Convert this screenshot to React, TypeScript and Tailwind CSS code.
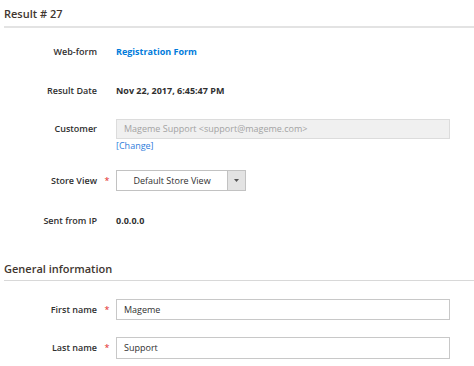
import React from "react";

const Label = ({ children, req }: { children: React.ReactNode; req?: boolean }) => (
  <div className="flex items-center shrink-0">
    <div className="w-[93px] text-right text-[9px] text-[#303030] font-semibold">{children}</div>
    <div className="w-[19px] text-center text-[9px] text-[#e22626] pl-[1px]">{req ? "*" : ""}</div>
  </div>
);

export default function App() {
  return (
    <div className="w-[474px] h-[366px] bg-white overflow-hidden" style={{ fontFamily: '"Open Sans", sans-serif' }}>
      <div className="pl-[4px]">
        <div className="h-[28px] flex items-center text-[11px] font-semibold text-[#41362f] border-b-2 border-[#e3e3e3] leading-none pt-[1px]">
          Result # 27
        </div>

        <div className="flex items-center h-[20px] mt-[14px]">
          <Label>Web-form</Label>
          <div className="text-[9px] font-bold text-[#007bdb]">Registration Form</div>
        </div>

        <div className="flex items-center h-[20px] mt-[19px]">
          <Label>Result Date</Label>
          <div className="text-[9px] font-bold text-[#303030]">Nov 22, 2017, 6:45:47 PM</div>
        </div>

        <div className="flex items-start mt-[18px]">
          <Label>
            <span className="leading-[20px]">Customer</span>
          </Label>
          <div className="flex flex-col">
            <div className="w-[334px] h-[20px] border border-[#dcdcdc] bg-[#f0f0f0] flex items-center px-[7px] text-[9px] text-[#a3a3a3]">
              Mageme Support &lt;support@mageme.com&gt;
            </div>
            <div className="text-[9px] text-[#2f7ddb] leading-[14px]">[Change]</div>
          </div>
        </div>

        <div className="flex items-center mt-[17px]">
          <Label req>Store View</Label>
          <div className="w-[130px] h-[21px] border border-[#c2c2c2] flex">
            <div className="flex-1 flex items-center justify-center text-[9px] text-[#303030]">Default Store View</div>
            <div className="w-[18px] bg-[#e3e3e3] border-l border-[#c2c2c2] flex items-center justify-center">
              <svg width="5" height="3" viewBox="0 0 5 3"><path d="M0 0H5L2.5 3Z" fill="#555" /></svg>
            </div>
          </div>
        </div>

        <div className="flex items-center h-[20px] mt-[20px]">
          <Label>Sent from IP</Label>
          <div className="text-[9px] font-bold text-[#303030]">0.0.0.0</div>
        </div>

        <div className="h-[24px] mt-[26px] flex items-center text-[11px] font-semibold text-[#41362f] border-b border-[#d8d8d8] leading-none">
          General information
        </div>

        <div className="flex items-center mt-[18px]">
          <Label req>First name</Label>
          <div className="w-[334px] h-[21px] border border-[#c8c8c8] flex items-center px-[7px] text-[9px] text-[#303030]">Mageme</div>
        </div>

        <div className="flex items-center mt-[17px]">
          <Label req>Last name</Label>
          <div className="w-[334px] h-[22px] border border-[#c8c8c8] flex items-center px-[7px] text-[9px] text-[#303030]">Support</div>
        </div>
      </div>
    </div>
  );
}
